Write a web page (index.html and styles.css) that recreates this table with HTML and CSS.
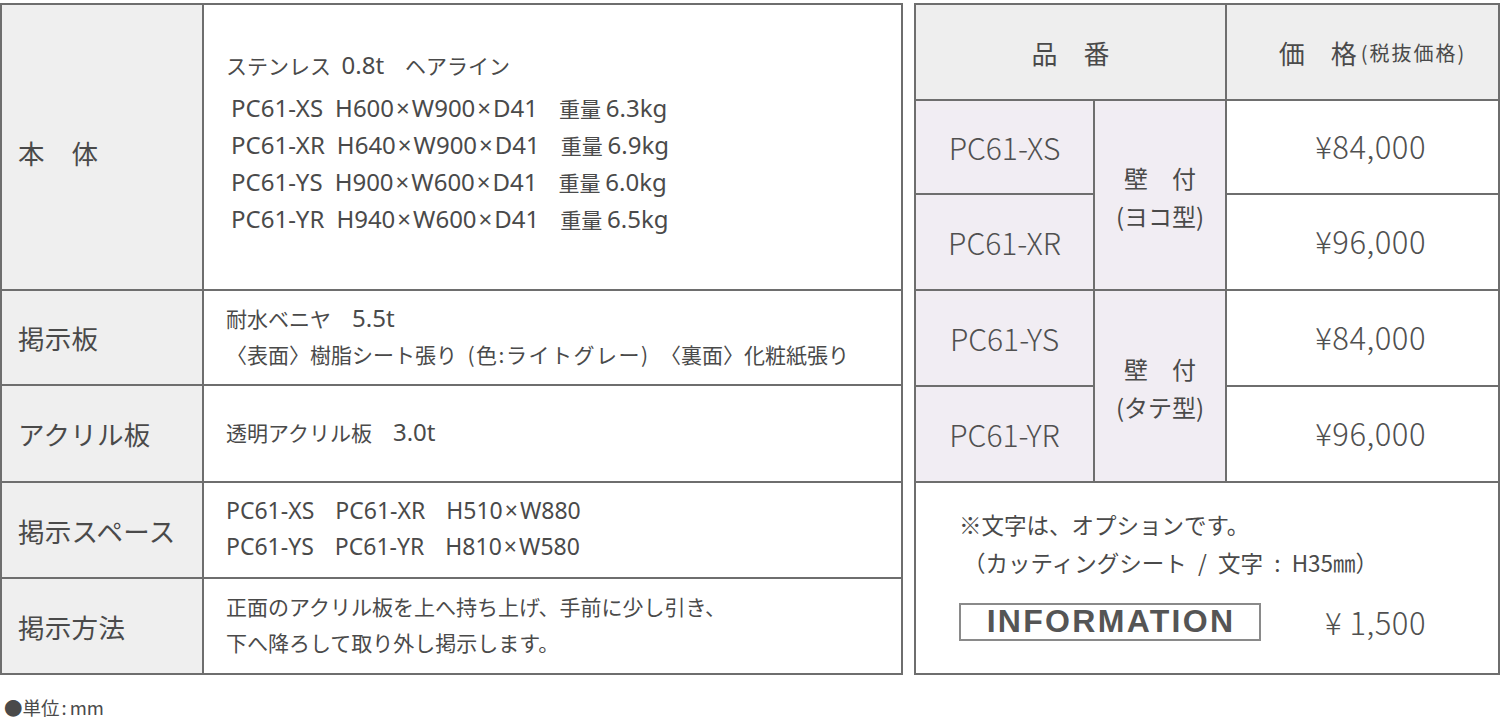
FILE: index.html
```html
<!DOCTYPE html>
<html lang="ja">
<head>
<meta charset="utf-8">
<title>PC61 仕様</title>
<link rel="stylesheet" href="styles.css">
</head>
<body>
<main class="page">
  <div class="tables">
    <section class="spec">
      <div class="lab lab-main">本　体</div>
      <div class="val val-main">
        <div class="ln first">ステンレス&ensp;<span class="en">0.8t</span>　ヘアライン</div>
        <div class="ln ind"><span class="en">PC61-XS&ensp;H600<span class="x">×</span>W900<span class="x">×</span>D41</span>　重量&nbsp;<span class="en">6.3kg</span></div>
        <div class="ln ind"><span class="en">PC61-XR&ensp;H640<span class="x">×</span>W900<span class="x">×</span>D41</span>　重量&nbsp;<span class="en">6.9kg</span></div>
        <div class="ln ind"><span class="en">PC61-YS&ensp;H900<span class="x">×</span>W600<span class="x">×</span>D41</span>　重量&nbsp;<span class="en">6.0kg</span></div>
        <div class="ln ind"><span class="en">PC61-YR&ensp;H940<span class="x">×</span>W600<span class="x">×</span>D41</span>　重量&nbsp;<span class="en">6.5kg</span></div>
      </div>

      <div class="lab">掲示板</div>
      <div class="val">
        <div class="ln">耐水ベニヤ　<span class="en">5.5t</span></div>
        <div class="ln">〈表面〉樹脂シート張り&ensp;<span class="wide">(色:ライトグレー)</span>&ensp;〈裏面〉化粧紙張り</div>
      </div>

      <div class="lab">アクリル板</div>
      <div class="val">
        <div class="ln">透明アクリル板　<span class="en">3.0t</span></div>
      </div>

      <div class="lab">掲示スペース</div>
      <div class="val">
        <div class="ln"><span class="en sm">PC61-XS</span>　<span class="en sm">PC61-XR</span>　<span class="en sm">H510<span class="x">×</span>W880</span></div>
        <div class="ln"><span class="en sm">PC61-YS</span>　<span class="en sm">PC61-YR</span>　<span class="en sm">H810<span class="x">×</span>W580</span></div>
      </div>

      <div class="lab">掲示方法</div>
      <div class="val">
        <div class="ln">正面のアクリル板を上へ持ち上げ、手前に少し引き、</div>
        <div class="ln">下へ降ろして取り外し掲示します。</div>
      </div>
    </section>

    <section class="price-table">
      <div class="hd hd-no">品　番</div>
      <div class="hd hd-price">価　格<span class="note">(税抜価格)</span></div>

      <div class="code">PC61-XS</div>
      <div class="mount">壁　付<br>(ヨコ型)</div>
      <div class="price">¥84,000</div>
      <div class="code">PC61-XR</div>
      <div class="price">¥96,000</div>

      <div class="code">PC61-YS</div>
      <div class="mount">壁　付<br>(タテ型)</div>
      <div class="price">¥84,000</div>
      <div class="code">PC61-YR</div>
      <div class="price">¥96,000</div>

      <div class="option">
        <p class="opt-line">※文字は、オプションです。</p>
        <p class="opt-line opt-sub">（カッティングシート&ensp;/&ensp;文字&ensp;:&ensp;H35㎜）</p>
        <div class="opt-row">
          <span class="info-box">INFORMATION</span>
          <span class="opt-price">¥ 1,500</span>
        </div>
      </div>
    </section>
  </div>
  <p class="unit">●単位<span class="colon">:</span>mm</p>
</main>
</body>
</html>
```

FILE: styles.css
```css
* { box-sizing: border-box; }

html, body {
  margin: 0;
  padding: 0;
  background: #ffffff;
}

body {
  font-family: "Noto Sans CJK JP", "Noto Sans", sans-serif;
  color: #4a4a4a;
}

.page {
  width: 1500px;
}

.tables {
  display: flex;
  gap: 11px;
  padding-top: 3px;
}

/* ---------- left spec table ---------- */
.spec {
  display: grid;
  grid-template-columns: 200px 697px;
  grid-template-rows: 284px 93px 95px 94px 94px;
  gap: 2px;
  padding: 2px;
  background: #6e6e6e;
  width: 903px;
}

.lab {
  background: #efefef;
  display: flex;
  align-items: center;
  padding-left: 16px;
  font-size: 26.5px;
  letter-spacing: 0.3px;
}

.lab-main {
  padding-top: 10px;
}

.val {
  background: #ffffff;
  display: flex;
  flex-direction: column;
  justify-content: center;
  padding-left: 22px;
  padding-bottom: 4px;
  font-size: 21px;
  line-height: 36px;
  white-space: nowrap;
}

.val-main {
  padding-bottom: 10px;
  line-height: 36.7px;
}

.ln.first {
  margin-bottom: 7px;
}

.ln.ind {
  padding-left: 5px;
}

.en {
  font-family: "Noto Sans", "Noto Sans CJK JP", sans-serif;
  font-size: 24px;
}

.en.sm {
  font-size: 23px;
}

.x {
  margin: 0 2px;
}

.wide {
  letter-spacing: 1.5px;
}

/* ---------- right price table ---------- */
.price-table {
  display: grid;
  grid-template-columns: 177px 130px 271px;
  grid-template-rows: 94px 92px 94px 94px 94px 190px;
  gap: 2px;
  padding: 2px;
  background: #6e6e6e;
  width: 586px;
}

.hd {
  background: #eeeeee;
  display: flex;
  align-items: center;
  justify-content: center;
  font-size: 26px;
}

.hd-no {
  grid-column: 1 / 3;
}

.hd-price {
  padding-left: 20px;
}

.note {
  font-size: 20px;
  margin-left: 4px;
  letter-spacing: 2px;
}

.code {
  background: #f1edf3;
  display: flex;
  align-items: center;
  justify-content: center;
  font-size: 30px;
  font-weight: 300;
  color: #505050;
}

.mount {
  grid-row: span 2;
  background: #f1edf3;
  display: flex;
  align-items: center;
  justify-content: center;
  text-align: center;
  font-size: 24px;
  line-height: 38px;
  padding-top: 4px;
}

.price {
  background: #ffffff;
  display: flex;
  align-items: center;
  justify-content: flex-end;
  padding-right: 72px;
  padding-bottom: 4px;
  font-size: 31px;
  font-weight: 300;
  letter-spacing: 0.5px;
  color: #505050;
}

.option {
  grid-column: 1 / 4;
  background: #ffffff;
  padding: 22px 72px 0 43px;
}

.opt-line {
  margin: 0;
  font-size: 22.5px;
  line-height: 38px;
  white-space: nowrap;
}

.opt-sub {
  padding-left: 4px;
}

.opt-row {
  display: flex;
  align-items: center;
  justify-content: space-between;
  margin-top: 18px;
}

.info-box {
  display: flex;
  align-items: center;
  justify-content: center;
  width: 302px;
  height: 38px;
  border: 2px solid #8a8a8a;
  font-family: "Liberation Sans", Arial, sans-serif;
  font-weight: 700;
  font-size: 32px;
  letter-spacing: 2.3px;
  color: #555555;
  padding-left: 2px;
}

.opt-price {
  font-size: 31px;
  font-weight: 300;
  letter-spacing: 0.5px;
  color: #505050;
}

/* ---------- footnote ---------- */
.unit {
  margin: 20px 0 0 4px;
  font-size: 18.5px;
  line-height: 25px;
}

.colon {
  margin: 0 3px 0 2px;
}
```
